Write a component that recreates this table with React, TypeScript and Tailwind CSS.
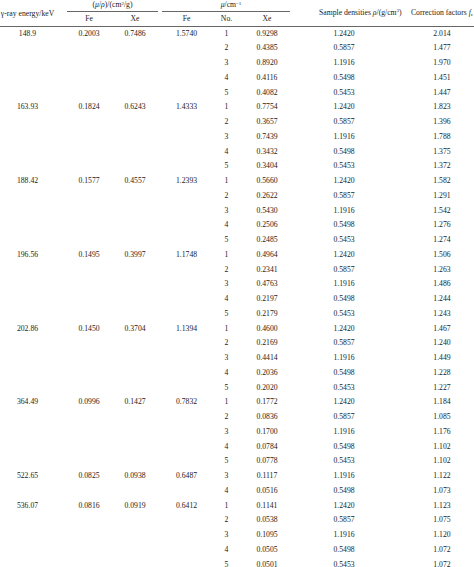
type Group = {
  energy: string;
  fe: string;
  xe: string;
  mu: string;
  rows: [string, string, string, string][];
};

const groups: Group[] = [
  {
    energy: "148.9", fe: "0.2003", xe: "0.7486", mu: "1.5740",
    rows: [
      ["1", "0.9298", "1.2420", "2.014"],
      ["2", "0.4385", "0.5857", "1.477"],
      ["3", "0.8920", "1.1916", "1.970"],
      ["4", "0.4116", "0.5498", "1.451"],
      ["5", "0.4082", "0.5453", "1.447"],
    ],
  },
  {
    energy: "163.93", fe: "0.1824", xe: "0.6243", mu: "1.4333",
    rows: [
      ["1", "0.7754", "1.2420", "1.823"],
      ["2", "0.3657", "0.5857", "1.396"],
      ["3", "0.7439", "1.1916", "1.788"],
      ["4", "0.3432", "0.5498", "1.375"],
      ["5", "0.3404", "0.5453", "1.372"],
    ],
  },
  {
    energy: "188.42", fe: "0.1577", xe: "0.4557", mu: "1.2393",
    rows: [
      ["1", "0.5660", "1.2420", "1.582"],
      ["2", "0.2622", "0.5857", "1.291"],
      ["3", "0.5430", "1.1916", "1.542"],
      ["4", "0.2506", "0.5498", "1.276"],
      ["5", "0.2485", "0.5453", "1.274"],
    ],
  },
  {
    energy: "196.56", fe: "0.1495", xe: "0.3997", mu: "1.1748",
    rows: [
      ["1", "0.4964", "1.2420", "1.506"],
      ["2", "0.2341", "0.5857", "1.263"],
      ["3", "0.4763", "1.1916", "1.486"],
      ["4", "0.2197", "0.5498", "1.244"],
      ["5", "0.2179", "0.5453", "1.243"],
    ],
  },
  {
    energy: "202.86", fe: "0.1450", xe: "0.3704", mu: "1.1394",
    rows: [
      ["1", "0.4600", "1.2420", "1.467"],
      ["2", "0.2169", "0.5857", "1.240"],
      ["3", "0.4414", "1.1916", "1.449"],
      ["4", "0.2036", "0.5498", "1.228"],
      ["5", "0.2020", "0.5453", "1.227"],
    ],
  },
  {
    energy: "364.49", fe: "0.0996", xe: "0.1427", mu: "0.7832",
    rows: [
      ["1", "0.1772", "1.2420", "1.184"],
      ["2", "0.0836", "0.5857", "1.085"],
      ["3", "0.1700", "1.1916", "1.176"],
      ["4", "0.0784", "0.5498", "1.102"],
      ["5", "0.0778", "0.5453", "1.102"],
    ],
  },
  {
    energy: "522.65", fe: "0.0825", xe: "0.0938", mu: "0.6487",
    rows: [
      ["3", "0.1117", "1.1916", "1.122"],
      ["4", "0.0516", "0.5498", "1.073"],
    ],
  },
  {
    energy: "536.07", fe: "0.0816", xe: "0.0919", mu: "0.6412",
    rows: [
      ["1", "0.1141", "1.2420", "1.123"],
      ["2", "0.0538", "0.5857", "1.075"],
      ["3", "0.1095", "1.1916", "1.120"],
      ["4", "0.0505", "0.5498", "1.072"],
      ["5", "0.0501", "0.5453", "1.072"],
    ],
  },
];

export default function App() {
  return (
    <div
      className="w-[474px] h-[567px] overflow-hidden bg-white text-[#222] text-[7.7px] leading-none"
      style={{ fontFamily: '"Liberation Serif", "Times New Roman", serif' }}
    >
      <table className="table-fixed border-collapse w-[503px] -ml-[6px] text-center whitespace-nowrap">
        <colgroup>
          <col className="w-[67px]" />
          <col className="w-[56px]" />
          <col className="w-[36px]" />
          <col className="w-[67px]" />
          <col className="w-[13px]" />
          <col className="w-[68px]" />
          <col className="w-[86px]" />
          <col className="w-[110px]" />
        </colgroup>
        <thead>
          {/* header row 1 */}
          <tr className="h-[12px]">
            <td rowSpan={2} className="p-0 pt-[2px] border-b border-[#666]">
              γ-ray energy/keV
            </td>
            <td colSpan={2} className="p-0 align-top">
              <div className="ml-[6px] -mr-[5px] pt-[1px] h-[12px] border-b border-[#666]">
                (<i>μ</i>/<i>ρ</i>)/(cm<sup className="text-[5px]">2</sup>/g)
              </div>
            </td>
            <td colSpan={3} className="p-0 align-top">
              <div className="ml-[9px] mr-[11px] pt-[1px] h-[12px] border-b border-[#666] pl-[10px]">
                <i>μ</i>/cm<sup className="text-[5px]">−1</sup>
              </div>
            </td>
            <td rowSpan={2} className="p-0 pl-[18px] border-b border-[#666]">
              Sample densities <i>ρ</i>/(g/cm<sup className="text-[5px]">3</sup>)
            </td>
            <td rowSpan={2} className="p-0 border-b border-[#666]">
              Correction factors <i>f</i>
              <sub className="text-[5px]">c</sub>
            </td>
          </tr>
          {/* header row 2 */}
          <tr className="h-[14px]">
            <td className="p-0 border-b border-[#666]">Fe</td>
            <td className="p-0 border-b border-[#666]">Xe</td>
            <td className="p-0 border-b border-[#666]">Fe</td>
            <td className="p-0 border-b border-[#666]">No.</td>
            <td className="p-0 border-b border-[#666]">Xe</td>
          </tr>
        </thead>
        <tbody>
          {groups.map((g) =>
            g.rows.map((r, i) => (
              <tr key={g.energy + r[0]} className="h-[14.75px]">
                <td className="p-0">{i === 0 ? g.energy : ""}</td>
                <td className="p-0">{i === 0 ? g.fe : ""}</td>
                <td className="p-0">{i === 0 ? g.xe : ""}</td>
                <td className="p-0">{i === 0 ? g.mu : ""}</td>
                <td className="p-0">{r[0]}</td>
                <td className="p-0">{r[1]}</td>
                <td className="p-0">{r[2]}</td>
                <td className="p-0">{r[3]}</td>
              </tr>
            ))
          )}
        </tbody>
      </table>
    </div>
  );
}
